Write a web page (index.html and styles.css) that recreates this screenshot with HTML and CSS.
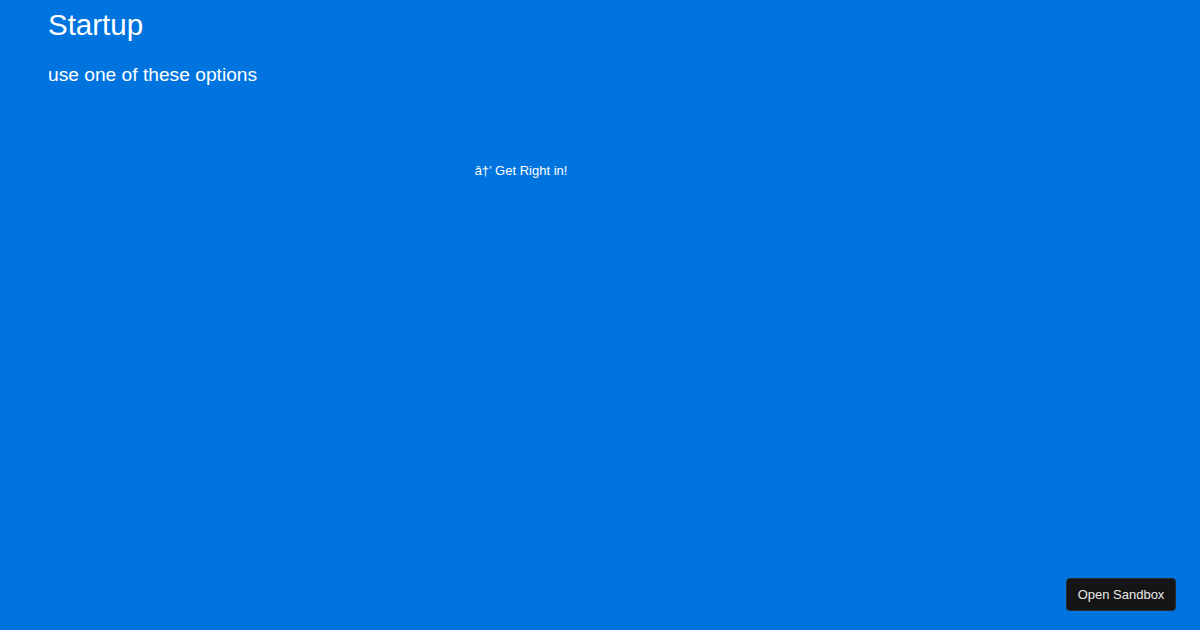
FILE: index.html
```html
<!DOCTYPE html>
<html lang="en">
<head>
<meta charset="utf-8">
<title>Startup</title>
<link rel="stylesheet" href="styles.css">
</head>
<body>
<main class="page">
  <h1 class="title">Startup</h1>
  <p class="subtitle">use one of these options</p>
  <div class="options">
    <div class="option"><span class="option-link">â†’ Get Right in!</span></div>
  </div>
</main>
<button class="sandbox-btn">Open Sandbox</button>
</body>
</html>
```

FILE: styles.css
```css
html, body {
  margin: 0;
  height: 100%;
}
body {
  background: #0074de;
  color: #ffffff;
  font-family: "Liberation Sans", Arial, sans-serif;
}
.page {
  padding: 8px 48px 0;
}
.title {
  margin: 0;
  font-size: 29.5px;
  font-weight: 400;
  line-height: 34px;
}
.subtitle {
  margin: 22px 0 0;
  font-size: 19.2px;
  line-height: 22px;
}
.options {
  display: flex;
  margin-top: 77px;
}
.option {
  width: 946px;
  text-align: center;
  font-size: 13px;
  line-height: 15px;
}
.sandbox-btn {
  position: fixed;
  right: 24px;
  bottom: 19px;
  height: 33px;
  width: 110px;
  padding: 0;
  background: #151515;
  color: #e8e8e8;
  border: 1px solid #2a2a2a;
  border-radius: 4px;
  font-family: "Liberation Sans", Arial, sans-serif;
  font-size: 13px;
}
```
